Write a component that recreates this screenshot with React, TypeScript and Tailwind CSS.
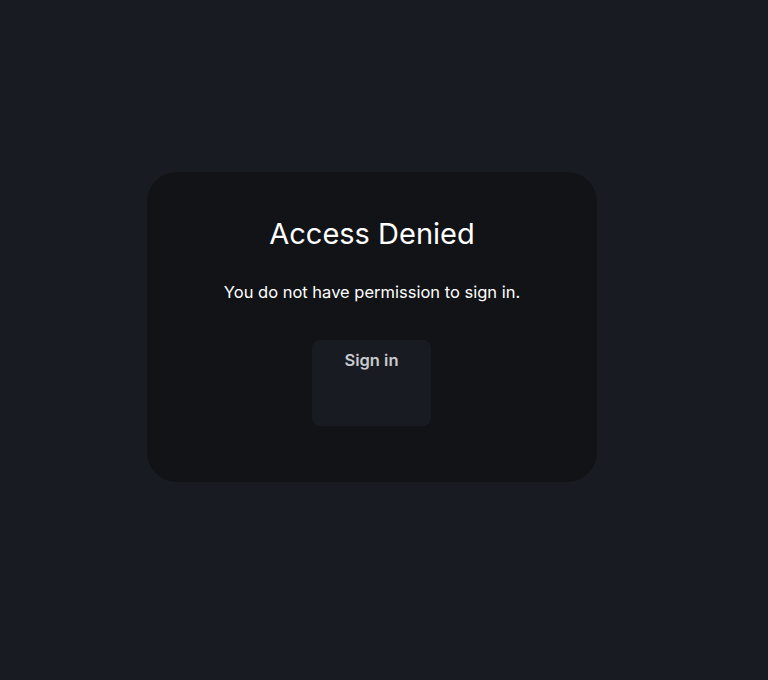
export default function App() {
  return (
    <div className="min-h-[680px] w-full bg-[#181b22] flex items-center justify-center pr-6 pb-[26px] font-['Inter',sans-serif]">
      <div className="w-[450px] h-[310px] rounded-[30px] bg-[#121316] flex flex-col items-center pt-[42px]">
        <h1 className="text-[29px] leading-[40px] text-white font-normal">Access Denied</h1>
        <p className="mt-[26px] text-[16.5px] leading-[24px] text-white">
          You do not have permission to sign in.
        </p>
        <button className="mt-[36px] -ml-px w-[119px] h-[86px] rounded-lg bg-[#181b22] text-[16.5px] font-semibold text-[#c9cacd] flex justify-center pt-[8px]">
          Sign in
        </button>
      </div>
    </div>
  );
}
